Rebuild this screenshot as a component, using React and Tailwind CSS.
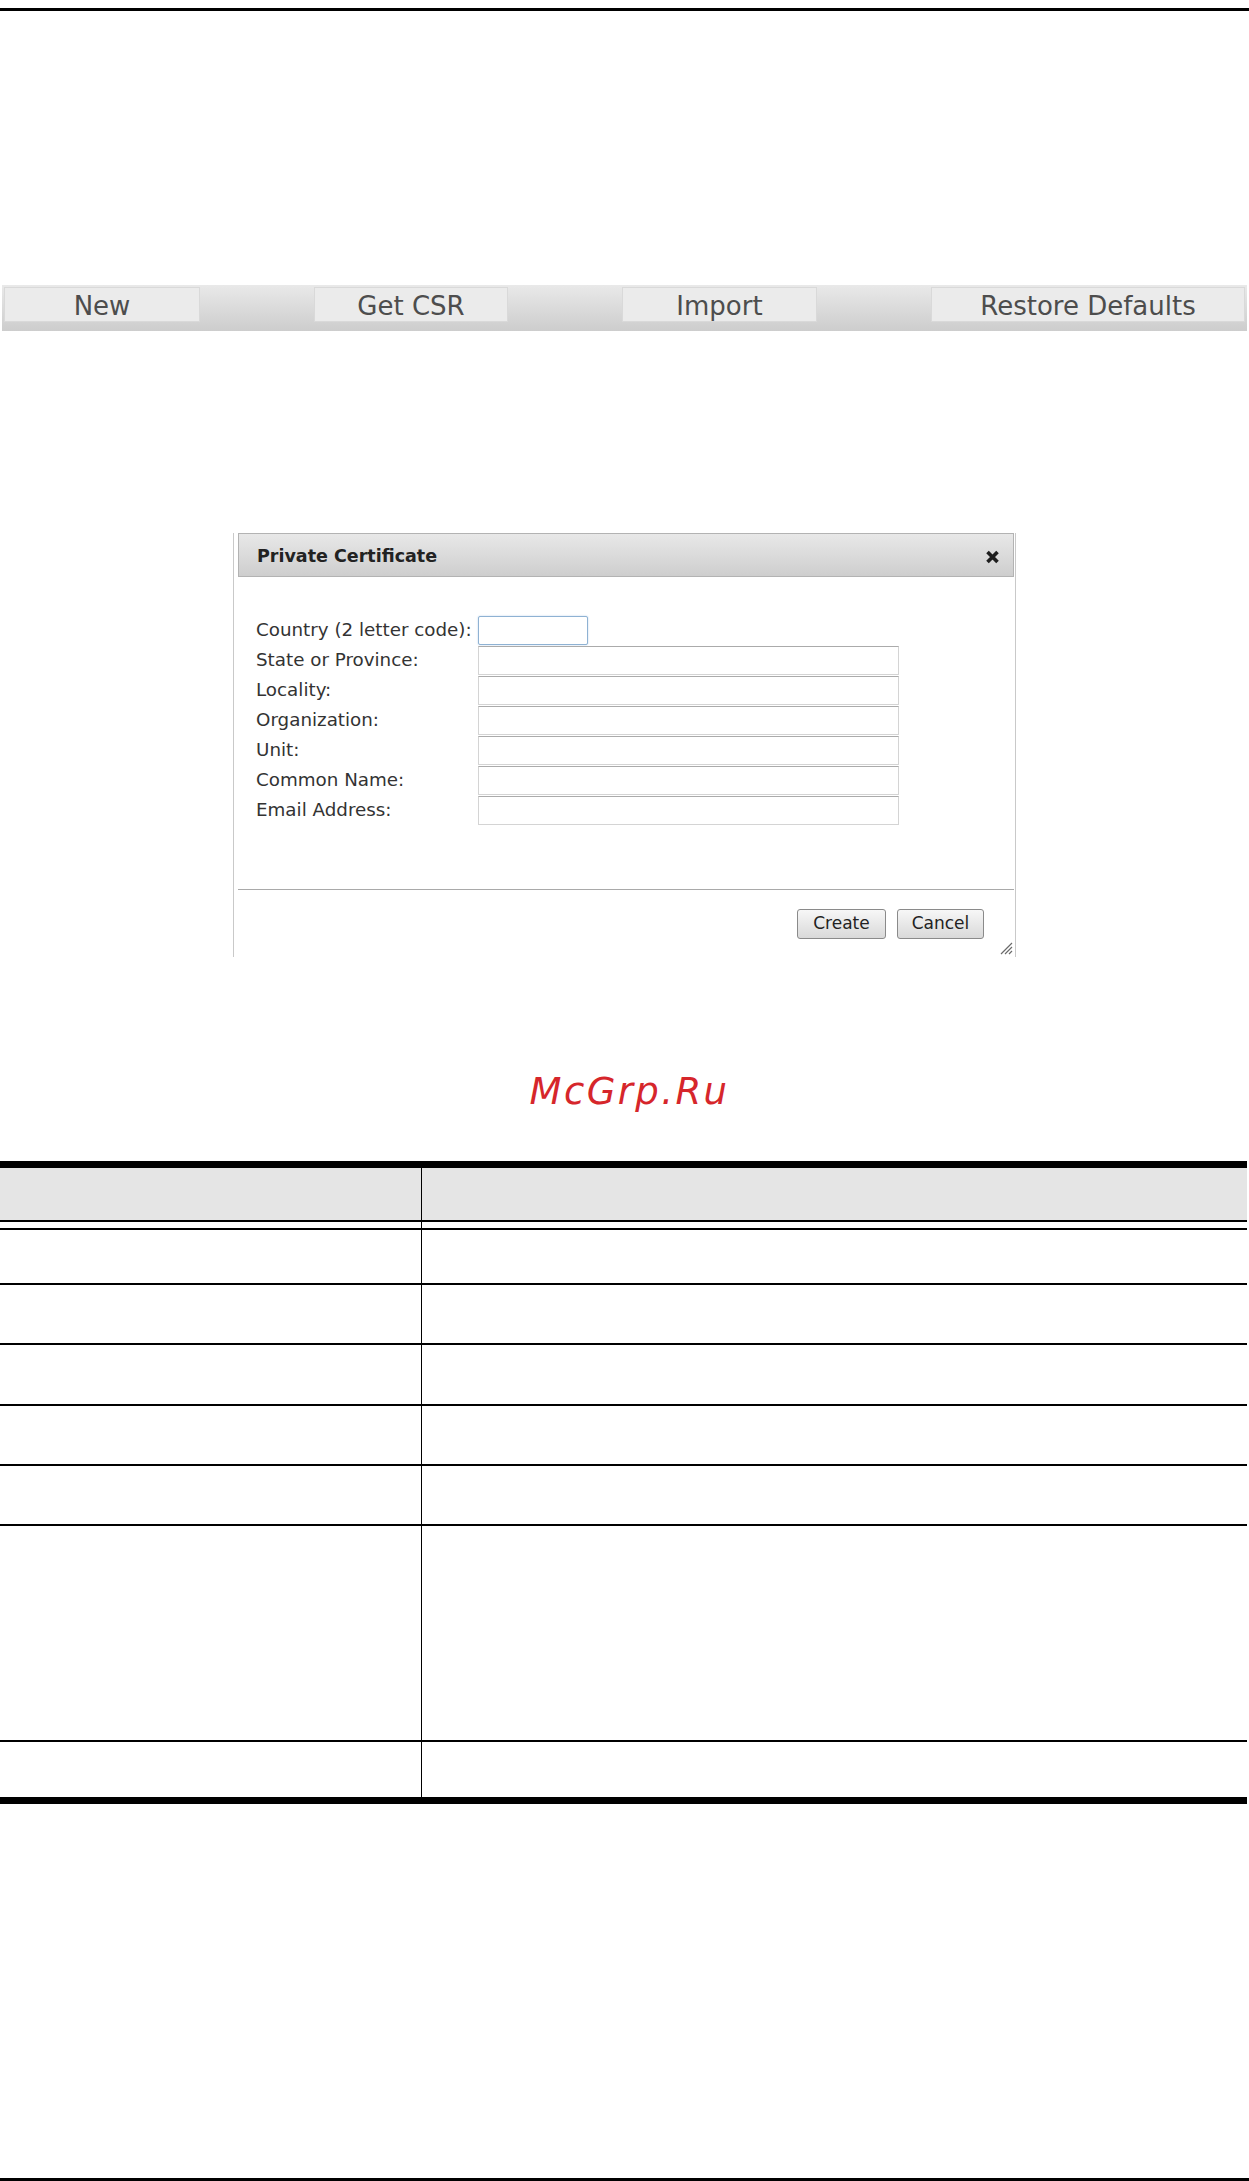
import React from "react"

const toolbarButtons = [
  { label: "New", w: "w-[196px]" },
  { label: "Get CSR", w: "w-[194px]" },
  { label: "Import", w: "w-[195px]" },
  { label: "Restore Defaults", w: "w-[314px]" },
]

const fields = [
  { label: "Country (2 letter code):", short: true },
  { label: "State or Province:" },
  { label: "Locality:" },
  { label: "Organization:" },
  { label: "Unit:" },
  { label: "Common Name:" },
  { label: "Email Address:" },
]

// body row heights of the parameter table
const rows = ["h-[53px]", "h-[58px]", "h-[59px]", "h-[58px]", "h-[58px]", "h-[214px]", "h-[55px]"]

const CloseIcon = () => (
  <svg width="15" height="14" viewBox="0 0 15 14">
    <path d="M2.5 2 L12.5 12 M12.5 2 L2.5 12" stroke="#1e1e1e" strokeWidth="3.6" strokeLinecap="butt" />
  </svg>
)

const Grip = () => (
  <svg width="13" height="13" viewBox="0 0 13 13">
    <path d="M12 1 L1 12 M12 5 L5 12 M12 9 L9 12" stroke="#6a6a6a" strokeWidth="1.2" />
  </svg>
)

const TableRow = ({ h, bg = "" }) => (
  <div className={`flex ${h} ${bg}`}>
    <div className="w-[422px] border-r border-black" />
    <div className="flex-1" />
  </div>
)

export default function App() {
  return (
    <div className="w-[1249px] h-[2181px] overflow-hidden bg-white font-['DejaVu_Sans',sans-serif]">
      {/* page header rule */}
      <div className="mt-[8px] h-[3px] bg-black" />

      {/* toolbar */}
      <div className="mt-[274px] mx-[2px] h-[46px] bg-gradient-to-b from-[#e9e9e9] to-[#cdcdcd] flex justify-between items-start pt-[2px] px-[2px]">
        {toolbarButtons.map((b) => (
          <div
            key={b.label}
            className={`${b.w} h-[35px] flex items-center justify-center pt-[2px] bg-[#ebebeb] border border-[#d9d9d9] text-[26px] leading-none text-[#4d4d4d]`}
          >
            {b.label}
          </div>
        ))}
      </div>

      {/* dialog */}
      <div className="relative mt-[202px] ml-[233px] w-[783px] h-[424px] border-l border-r border-[#c9c9c9]">
        <div className="ml-[4px] mr-[1px] h-[44px] border border-[#b3b3b3] bg-gradient-to-b from-[#e8e8e8] to-[#cecece] flex items-center justify-between pl-[18px] pr-[13px] pt-[3px]">
          <span className="text-[17.5px] font-bold text-[#222]">Private Certificate</span>
          <CloseIcon />
        </div>

        <div className="mt-[39px] pl-[22px] flex flex-col gap-[1px]">
          {fields.map((f) => (
            <div key={f.label} className="flex items-center h-[29px]">
              <div className="w-[222px] text-[18.3px] text-[#333] leading-none">{f.label}</div>
              <div
                className={
                  f.short
                    ? "w-[110px] h-[29px] bg-white border border-[#8fb2d3] rounded-[2px] shadow-[0_0_2px_#b9d2ea]"
                    : "w-[421px] h-[29px] bg-white border border-[#d4d4d4] border-t-[#ababab]"
                }
              />
            </div>
          ))}
        </div>

        <div className="mt-[64px] ml-[4px] mr-[1px] h-px bg-[#a9a9a9]" />

        <div className="mt-[19px] flex justify-end gap-[11px] pr-[31px]">
          <div className="w-[89px] h-[30px] flex items-center justify-center rounded-[3px] border border-[#8a8a8a] bg-gradient-to-b from-[#f7f7f7] to-[#d9d9d9] text-[17px] text-[#222]">
            Create
          </div>
          <div className="w-[87px] h-[30px] flex items-center justify-center rounded-[3px] border border-[#8a8a8a] bg-gradient-to-b from-[#f7f7f7] to-[#d9d9d9] text-[17px] text-[#222]">
            Cancel
          </div>
        </div>

        <div className="absolute right-[2px] bottom-[2px]">
          <Grip />
        </div>
      </div>

      {/* watermark */}
      <div className="mt-[116px] pl-[10px] text-center text-[37px] leading-[37px] italic tracking-[2.4px] text-[#d6262b]">
        McGrp.Ru
      </div>

      {/* parameter table */}
      <div className="mt-[51px] w-[1247px]">
        <div className="h-[7px] bg-black" />
        <TableRow h="h-[52px]" bg="bg-[#e5e5e5]" />
        <div className="h-[2px] bg-black" />
        <TableRow h="h-[6px]" />
        <div className="h-[2px] bg-black" />
        {rows.map((h, i) => (
          <React.Fragment key={i}>
            <TableRow h={h} />
            {i < rows.length - 1 && <div className="h-[2px] bg-black" />}
          </React.Fragment>
        ))}
        <div className="h-[7px] bg-black" />
      </div>

      {/* page footer rule */}
      <div className="mt-[374px] h-[3px] bg-black" />
    </div>
  )
}
